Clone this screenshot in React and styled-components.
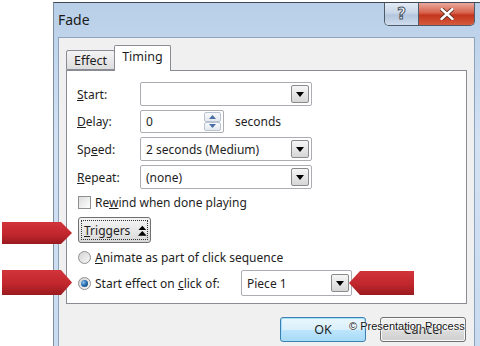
import React from 'react';
import styled, { createGlobalStyle } from 'styled-components';

const GlobalStyle = createGlobalStyle`
  html, body {
    margin: 0;
    padding: 0;
    background: #ffffff;
  }
  body {
    font-family: "Noto Sans", "Open Sans", sans-serif;
    font-size: 12px;
    color: #1e1e1e;
  }
`;

const Page = styled.div`
  position: relative;
  width: 480px;
  height: 346px;
  overflow: hidden;
  background: #ffffff;
  padding-top: 2px;
  box-sizing: border-box;
`;

const Window = styled.div`
  margin-left: 53px;
  width: 440px;
  height: 344px;
  box-sizing: border-box;
  border-top: 1px solid #3f4a56;
  border-left: 1px solid #7d8ea3;
  background: linear-gradient(180deg, #b8cfe8 0%, #d3e2f3 40%, #c9dbef 100%);
  display: flex;
  flex-direction: column;
`;

const TitleBar = styled.div`
  height: 34px;
  display: flex;
  align-items: flex-start;
  justify-content: space-between;
  padding-left: 4px;
  padding-right: 18px;
`;

const Title = styled.div`
  margin-top: 8px;
  font-size: 14px;
  line-height: 18px;
  color: #1a1a1a;
`;

const Caption = styled.div`
  display: flex;
  height: 22px;
  border: 1px solid #4f5b69;
  border-top: none;
  border-radius: 0 0 5px 5px;
  overflow: hidden;
`;

const CaptionButton = styled.div`
  width: ${(p) => p.w}px;
  display: flex;
  align-items: center;
  justify-content: center;
  background: ${(p) =>
    p.close
      ? 'linear-gradient(180deg, #e9a99b 0%, #d7614c 45%, #c2351c 55%, #d65a3c 100%)'
      : 'linear-gradient(180deg, #e3ebf5 0%, #c9d7e8 45%, #b3c6dd 55%, #cfdcec 100%)'};
  border-left: ${(p) => (p.close ? '1px solid #4f5b69' : 'none')};
`;

const HelpGlyph = styled.span`
  font-family: "DejaVu Sans", sans-serif;
  font-weight: bold;
  font-size: 15px;
  line-height: 15px;
  color: #ffffff;
  -webkit-text-stroke: 1px #4a5563;
`;

const Client = styled.div`
  flex: 1;
  margin-left: 4px;
  width: 417px;
  box-sizing: border-box;
  background: #f0f0f0;
  border-top: 1px solid #8da2bb;
  border-left: 1px solid #8da2bb;
  border-right: 1px solid #8da2bb;
  padding: 7px 8px 0 7px;
  display: flex;
  flex-direction: column;
`;

const TabStrip = styled.div`
  display: flex;
  align-items: flex-end;
  height: 25px;
  position: relative;
  z-index: 1;
`;

const Tab = styled.div`
  box-sizing: border-box;
  height: ${(p) => (p.active ? 26 : 20)}px;
  padding: 0 7px;
  margin-left: ${(p) => (p.active ? -1 : 0)}px;
  margin-bottom: ${(p) => (p.active ? -1 : 0)}px;
  border: 1px solid #898c95;
  border-bottom: ${(p) => (p.active ? 'none' : '1px solid #898c95')};
  border-radius: 2px 2px 0 0;
  background: ${(p) =>
    p.active ? '#ffffff' : 'linear-gradient(180deg, #f3f3f3 0%, #e9e9e9 50%, #dcdcdc 100%)'};
  font-size: 12.5px;
  line-height: ${(p) => (p.active ? 22 : 19)}px;
`;

const Panel = styled.div`
  box-sizing: border-box;
  height: 234px;
  width: 401px;
  background: #ffffff;
  border: 1px solid #898c95;
  padding: 11px 10px 0 10px;
  display: flex;
  flex-direction: column;
`;

const FieldRow = styled.div`
  display: grid;
  grid-template-columns: 63px auto 1fr;
  align-items: center;
  height: ${(p) => p.h || 24}px;
  margin-bottom: 4px;
`;

const Label = styled.div`
  font-size: 12px;
`;

const Combo = styled.div`
  box-sizing: border-box;
  width: ${(p) => p.w || 172}px;
  height: ${(p) => p.h || 24}px;
  border: 1px solid #abadb3;
  border-radius: 2px;
  background: #ffffff;
  display: flex;
  align-items: center;
  justify-content: space-between;
  padding: 0 2px 0 5px;
  font-size: 12px;
`;

const DropButton = styled.div`
  box-sizing: border-box;
  width: 18px;
  height: 18px;
  border: 1px solid #8a8a8a;
  border-radius: 2px;
  background: linear-gradient(180deg, #f6f6f6 0%, #e6e6e6 50%, #d6d6d6 100%);
  display: flex;
  align-items: center;
  justify-content: center;
`;

const Spin = styled.div`
  box-sizing: border-box;
  width: 84px;
  height: 23px;
  border: 1px solid #abadb3;
  border-radius: 2px;
  background: #ffffff;
  display: flex;
  align-items: center;
  justify-content: space-between;
  padding: 0 2px 0 5px;
  font-size: 12px;
`;

const SpinButtons = styled.div`
  display: flex;
  flex-direction: column;
  width: 17px;
  height: 19px;
`;

const SpinHalf = styled.div`
  flex: 1;
  box-sizing: border-box;
  border: 1px solid #b9c3d1;
  border-radius: 2px;
  background: linear-gradient(180deg, #f8f9fb 0%, #e4e8ee 100%);
  display: flex;
  align-items: center;
  justify-content: center;
`;

const Units = styled.span`
  margin-left: 11px;
  font-size: 12px;
`;

const CheckRow = styled.div`
  display: flex;
  align-items: center;
  gap: 4px;
  height: 18px;
  margin-top: ${(p) => p.mt || 0}px;
  padding-left: 1px;
  font-size: 12px;
`;

const CheckBox = styled.div`
  box-sizing: border-box;
  width: 13px;
  height: 13px;
  border: 1px solid #8e8f8f;
  background: linear-gradient(135deg, #dcdcdc 0%, #ffffff 100%);
`;

const Radio = styled.div`
  box-sizing: border-box;
  width: 13px;
  height: 13px;
  border-radius: 50%;
  border: 1px solid #8e8f8f;
  background: linear-gradient(135deg, #d4d4d4 0%, #f6f6f6 100%);
  display: flex;
  align-items: center;
  justify-content: center;

  &::after {
    content: '';
    display: ${(p) => (p.checked ? 'block' : 'none')};
    width: 7px;
    height: 7px;
    border-radius: 50%;
    background: radial-gradient(circle at 35% 35%, #8fc3ef 0%, #2a6fb2 45%, #0d3766 100%);
  }
`;

const TriggersButton = styled.div`
  box-sizing: border-box;
  margin-top: 6px;
  margin-left: 1px;
  width: 73px;
  height: 26px;
  border: 1px solid #707070;
  border-radius: 3px;
  background: linear-gradient(180deg, #f4f4f4 0%, #e8e8e8 50%, #d8d8d8 100%);
  padding: 2px;
`;

const FocusRect = styled.div`
  height: 100%;
  box-sizing: border-box;
  border: 1px dotted #333;
  display: flex;
  align-items: center;
  gap: 8px;
  padding-left: 2px;
  font-size: 12px;
`;

const ClickRow = styled.div`
  display: flex;
  align-items: center;
  height: 26px;
  margin-top: 4px;
  padding-left: 1px;
  font-size: 12px;
`;

const ClickText = styled.span`
  margin-left: 4px;
  width: 146px;
`;

const Footer = styled.div`
  display: flex;
  justify-content: flex-end;
  gap: 14px;
  margin-top: 13px;
`;

const DialogButton = styled.div`
  box-sizing: border-box;
  width: 86px;
  height: 25px;
  border-radius: 3px;
  border: 1px solid ${(p) => (p.primary ? '#3c7fb1' : '#707070')};
  box-shadow: ${(p) => (p.primary ? 'inset 0 0 0 1px #a6e0fb' : 'inset 0 0 0 1px #fbfbfb')};
  background: ${(p) =>
    p.primary
      ? 'linear-gradient(180deg, #eaf6fd 0%, #d9f0fc 50%, #bee6fd 51%, #a7d9f5 100%)'
      : 'linear-gradient(180deg, #f2f2f2 0%, #ebebeb 50%, #dddddd 51%, #cfcfcf 100%)'};
  display: flex;
  align-items: center;
  justify-content: center;
  font-size: 12.5px;
`;

const Arrow = styled.svg`
  position: absolute;
  left: ${(p) => p.x}px;
  top: ${(p) => p.y}px;
`;

const Watermark = styled.div`
  position: absolute;
  left: 349px;
  top: 320px;
  font-family: "Liberation Sans", Arial, sans-serif;
  font-size: 11px;
  color: #111;
  text-shadow: 0 0 2px #fff, 0 0 2px #fff, 0 0 1px #fff;
  white-space: nowrap;
`;

const DownTriangle = () => (
  <svg width="8" height="5" viewBox="0 0 8 5">
    <path d="M0 0 H8 L4 5 Z" fill="#000" />
  </svg>
);

const SpinTriangle = ({ up }) => (
  <svg width="7" height="4" viewBox="0 0 7 4">
    <path d={up ? 'M0 4 L3.5 0 L7 4 Z' : 'M0 0 H7 L3.5 4 Z'} fill="#4a6ea5" />
  </svg>
);

const DoubleUp = () => (
  <svg width="9" height="11" viewBox="0 0 9 11">
    <path d="M0.5 5 L4.5 0.5 L8.5 5 Z M0 11 L4.5 6 L9 11 Z" fill="#000" />
  </svg>
);

const CloseX = () => (
  <svg width="14" height="12" viewBox="0 0 14 12">
    <path
      d="M1.5 1 L12.5 11 M12.5 1 L1.5 11"
      stroke="#5a2a22"
      strokeWidth="4.2"
      strokeLinecap="round"
    />
    <path
      d="M1.5 1 L12.5 11 M12.5 1 L1.5 11"
      stroke="#ffffff"
      strokeWidth="2.4"
      strokeLinecap="round"
    />
  </svg>
);

const RedArrow = ({ x, y, w, h, left }) => {
  const head = 11;
  const d = left
    ? `M0 ${h / 2} L${head} 0 H${w} V${h} H${head} Z`
    : `M0 0 H${w - head} L${w} ${h / 2} L${w - head} ${h} H0 Z`;
  const id = `g${x}${y}`;
  return (
    <Arrow x={x} y={y} width={w} height={h} viewBox={`0 0 ${w} ${h}`}>
      <defs>
        <linearGradient id={id} x1="0" y1="0" x2="0" y2="1">
          <stop offset="0" stopColor="#d2343a" />
          <stop offset="0.55" stopColor="#c1272d" />
          <stop offset="1" stopColor="#9a1a1f" />
        </linearGradient>
      </defs>
      <path d={d} fill={`url(#${id})`} />
    </Arrow>
  );
};

export default function App() {
  return (
    <Page>
      <GlobalStyle />
      <Window>
        <TitleBar>
          <Title>Fade</Title>
          <Caption>
            <CaptionButton w={33}>
              <HelpGlyph>?</HelpGlyph>
            </CaptionButton>
            <CaptionButton w={55} close>
              <CloseX />
            </CaptionButton>
          </Caption>
        </TitleBar>
        <Client>
          <TabStrip>
            <Tab>Effect</Tab>
            <Tab active>Timing</Tab>
          </TabStrip>
          <Panel>
            <FieldRow>
              <Label>
                <u>S</u>tart:
              </Label>
              <Combo>
                <span />
                <DropButton>
                  <DownTriangle />
                </DropButton>
              </Combo>
            </FieldRow>
            <FieldRow h={23}>
              <Label>
                <u>D</u>elay:
              </Label>
              <Spin>
                <span>0</span>
                <SpinButtons>
                  <SpinHalf>
                    <SpinTriangle up />
                  </SpinHalf>
                  <SpinHalf>
                    <SpinTriangle />
                  </SpinHalf>
                </SpinButtons>
              </Spin>
              <Units>seconds</Units>
            </FieldRow>
            <FieldRow>
              <Label>
                Sp<u>e</u>ed:
              </Label>
              <Combo>
                <span>2 seconds (Medium)</span>
                <DropButton>
                  <DownTriangle />
                </DropButton>
              </Combo>
            </FieldRow>
            <FieldRow>
              <Label>
                <u>R</u>epeat:
              </Label>
              <Combo>
                <span>(none)</span>
                <DropButton>
                  <DownTriangle />
                </DropButton>
              </Combo>
            </FieldRow>
            <CheckRow>
              <CheckBox />
              <span>
                Re<u>w</u>ind when done playing
              </span>
            </CheckRow>
            <TriggersButton>
              <FocusRect>
                <span>
                  <u>T</u>riggers
                </span>
                <DoubleUp />
              </FocusRect>
            </TriggersButton>
            <CheckRow mt={5}>
              <Radio />
              <span>
                <u>A</u>nimate as part of click sequence
              </span>
            </CheckRow>
            <ClickRow>
              <Radio checked />
              <ClickText>
                Start effect on <u>c</u>lick of:
              </ClickText>
              <Combo w={111} h={26}>
                <span>Piece 1</span>
                <DropButton>
                  <DownTriangle />
                </DropButton>
              </Combo>
            </ClickRow>
          </Panel>
          <Footer>
            <DialogButton primary>OK</DialogButton>
            <DialogButton>Cancel</DialogButton>
          </Footer>
        </Client>
      </Window>
      <RedArrow x={2} y={222} w={70} h={22} />
      <RedArrow x={2} y={270} w={70} h={25} />
      <RedArrow x={349} y={271} w={65} h={24} left />
      <Watermark>© Presentation Process</Watermark>
    </Page>
  );
}
